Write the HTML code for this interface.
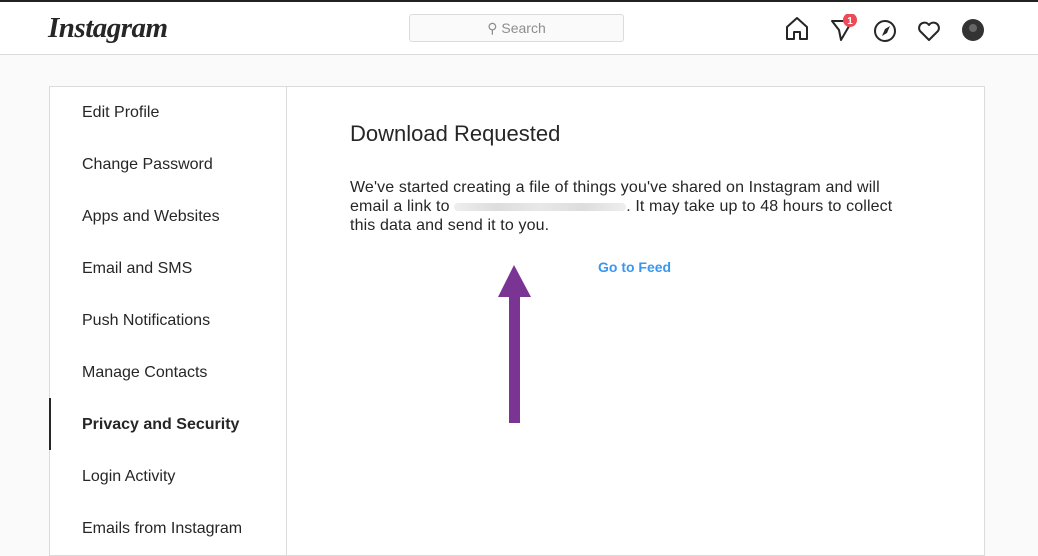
<!DOCTYPE html>
<html><head><style>
*{margin:0;padding:0;box-sizing:border-box}
body{width:1038px;height:545px;overflow:hidden;background:#fafafa;font-family:"Liberation Sans",sans-serif;color:#262626;position:relative}
.top{position:absolute;left:0;top:0;width:1038px;height:2px;background:#222}
.hdr{position:absolute;left:0;top:2px;width:1038px;height:53px;background:#fff;border-bottom:1px solid #dbdbdb}
.logo{position:absolute;left:48px;top:10px;font-family:"Liberation Serif",serif;font-style:italic;font-size:29px;font-weight:bold;letter-spacing:-0.5px;color:#262626}
.search{position:absolute;left:409px;top:12px;width:215px;height:28px;background:#fafafa;border:1px solid #dbdbdb;border-radius:3px;font-size:14px;color:#8e8e8e;text-align:center;line-height:26px}
.card{position:absolute;left:49px;top:86px;width:936px;height:470px;background:#fff;border:1px solid #dbdbdb}
.side{position:absolute;left:0;top:0;width:237px;height:100%;border-right:1px solid #dbdbdb}
.side div{position:absolute;left:32px;font-size:16px;color:#262626}
.act{position:absolute;left:-1px;top:311px;width:2px;height:52px;background:#262626}
h1{position:absolute;left:350px;top:121px;font-size:22px;font-weight:normal;color:#262626}
.p{position:absolute;left:350px;top:178px;font-size:16px;line-height:19px;width:575px;letter-spacing:0.12px;color:#262626}
.blur{display:inline-block;width:172px;height:8px;background:linear-gradient(90deg,#eee,#ddd,#e8e8e8,#ddd,#eee);border-radius:4px;vertical-align:middle}
.go{position:absolute;left:598px;top:259px;font-size:14px;font-weight:bold;color:#3897f0}
</style></head><body>
<div class="top"></div>
<div class="hdr">
<div class="logo">Instagram</div>
<div class="search">&#9906; Search</div>
<svg style="position:absolute;left:784px;top:12px" width="210" height="30" viewBox="0 0 210 30">
<path d="M3 25V13L13 4l10 9v12h-7v-7h-6v7z" fill="none" stroke="#262626" stroke-width="2" stroke-linejoin="round"/>
<path d="M48 7l20 0-11 19-2-10z" fill="none" stroke="#262626" stroke-width="2" stroke-linejoin="round"/>
<circle cx="66" cy="6" r="7" fill="#ed4956"/><text x="66" y="10" font-size="10" font-weight="bold" fill="#fff" text-anchor="middle" font-family="Liberation Sans">1</text>
<circle cx="101" cy="17" r="10" fill="none" stroke="#262626" stroke-width="2"/>
<path d="M106 12l-3 7-5 3 3-7z" fill="#262626"/>
<path d="M145 26l-9-9a5 5 0 0 1 9-6a5 5 0 0 1 9 6z" fill="none" stroke="#262626" stroke-width="2" stroke-linejoin="round"/>
<circle cx="189" cy="16" r="11" fill="#333"/><circle cx="189" cy="14" r="4" fill="#666"/>
</svg>
</div>
<div class="card">
<div class="side">
<div style="top:17px">Edit Profile</div>
<div style="top:69px">Change Password</div>
<div style="top:121px">Apps and Websites</div>
<div style="top:173px">Email and SMS</div>
<div style="top:225px">Push Notifications</div>
<div style="top:277px">Manage Contacts</div>
<div style="top:329px;font-weight:bold">Privacy and Security</div>
<div style="top:381px">Login Activity</div>
<div style="top:433px">Emails from Instagram</div>
<span class="act"></span>
</div>
</div>
<h1>Download Requested</h1>
<div class="p">We've started creating a file of things you've shared on Instagram and will<br>email a link to <span class="blur"></span>. It may take up to 48 hours to collect<br>this data and send it to you.</div>
<div class="go">Go to Feed</div>
<svg style="position:absolute;left:495px;top:260px" width="40" height="165" viewBox="0 0 40 165">
<path d="M19 5L3 37h11v126h11V37h11z" fill="#7a3594"/>
</svg>
</body></html>
